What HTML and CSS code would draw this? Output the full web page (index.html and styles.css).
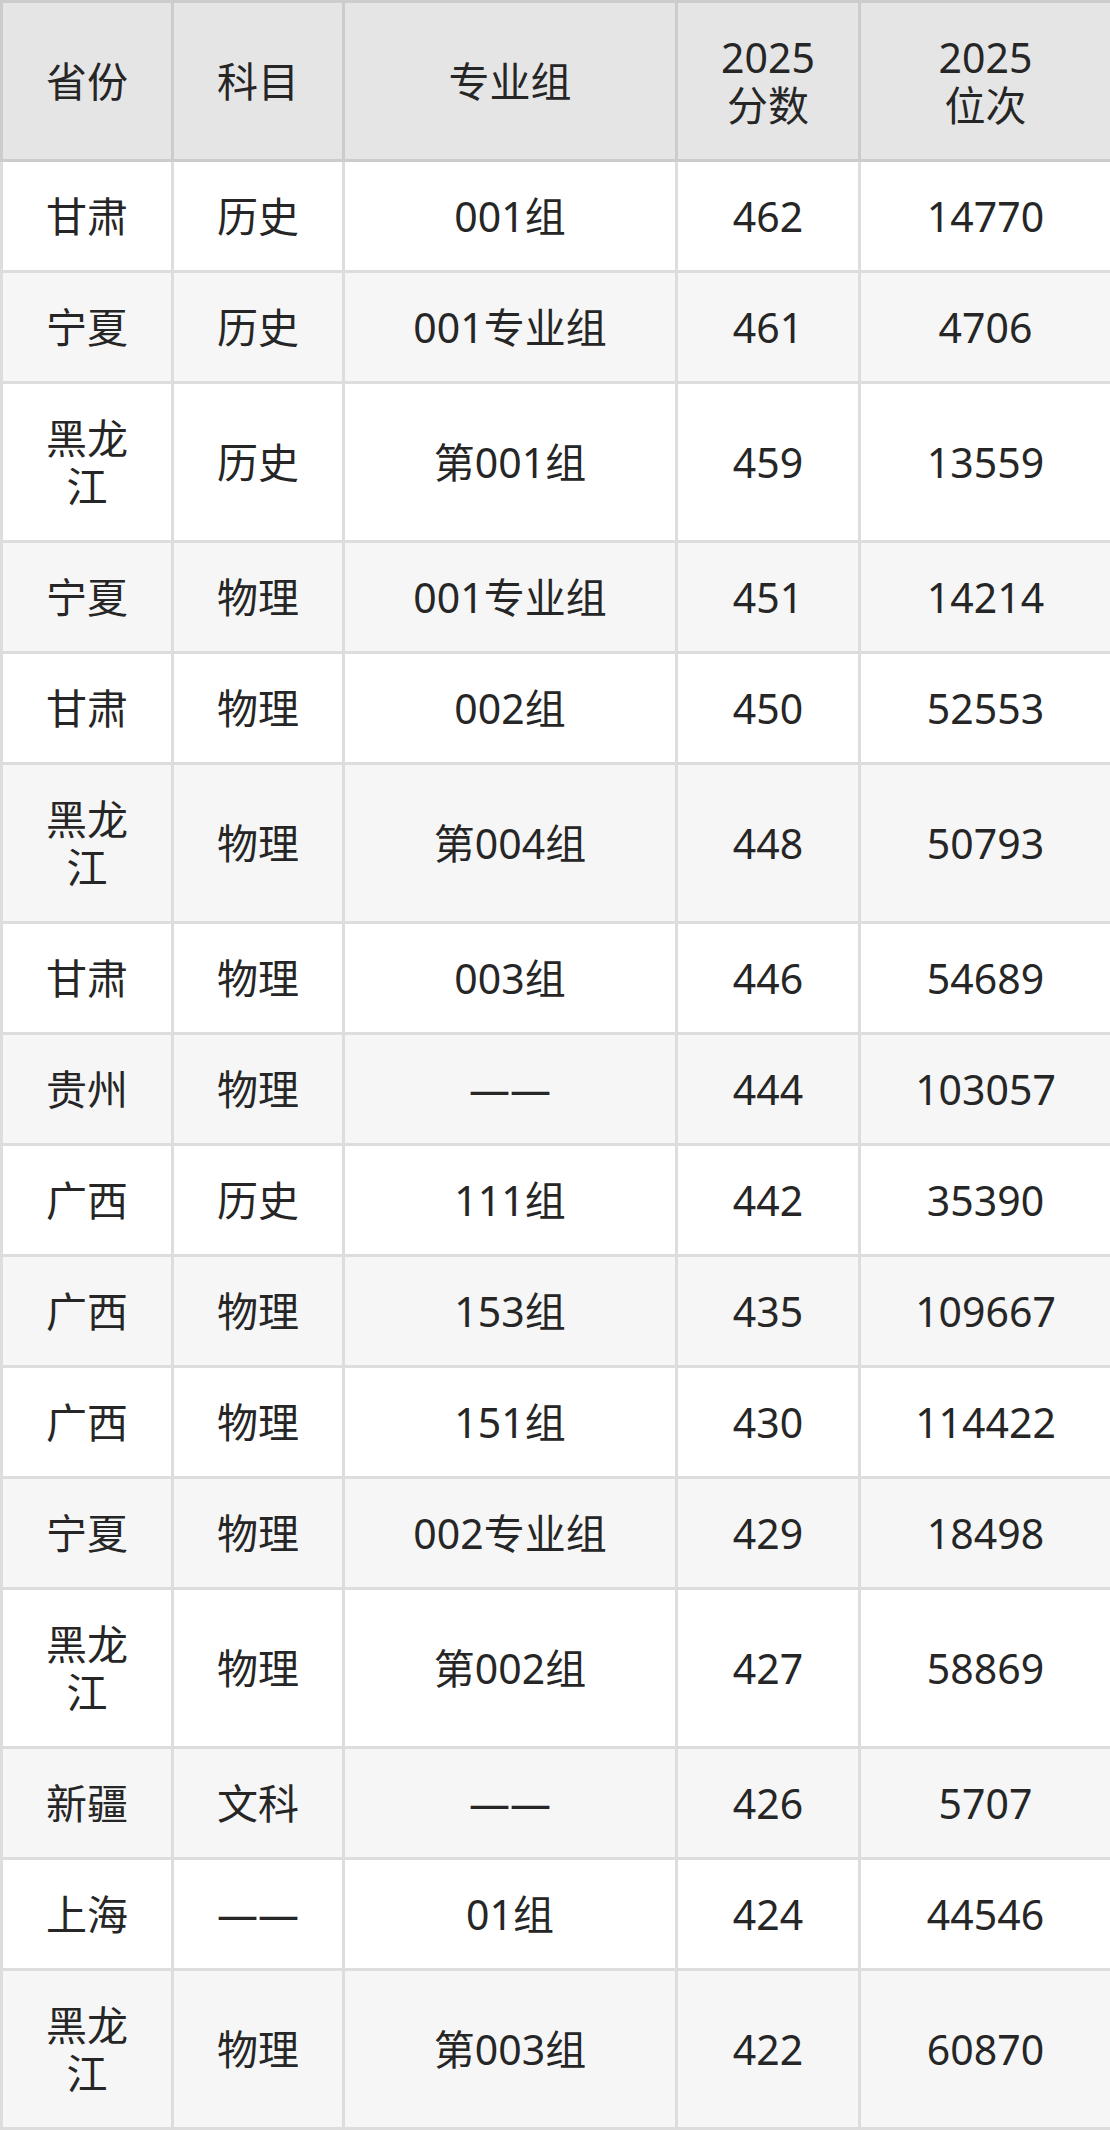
FILE: index.html
```html
<!DOCTYPE html>
<html lang="zh-CN">
<head>
<meta charset="utf-8">
<title>分数线</title>
<link rel="stylesheet" href="styles.css">
</head>
<body>
<table class="score-table">
  <colgroup>
    <col class="c-prov">
    <col class="c-subj">
    <col class="c-group">
    <col class="c-score">
    <col class="c-rank">
  </colgroup>
  <thead>
    <tr><th>省份</th><th>科目</th><th>专业组</th><th>2025<br>分数</th><th>2025<br>位次</th></tr>
  </thead>
  <tbody>
    <tr><td>甘肃</td><td>历史</td><td>001组</td><td>462</td><td>14770</td></tr>
    <tr><td>宁夏</td><td>历史</td><td>001专业组</td><td>461</td><td>4706</td></tr>
    <tr><td>黑龙<br>江</td><td>历史</td><td>第001组</td><td>459</td><td>13559</td></tr>
    <tr><td>宁夏</td><td>物理</td><td>001专业组</td><td>451</td><td>14214</td></tr>
    <tr><td>甘肃</td><td>物理</td><td>002组</td><td>450</td><td>52553</td></tr>
    <tr><td>黑龙<br>江</td><td>物理</td><td>第004组</td><td>448</td><td>50793</td></tr>
    <tr><td>甘肃</td><td>物理</td><td>003组</td><td>446</td><td>54689</td></tr>
    <tr><td>贵州</td><td>物理</td><td>——</td><td>444</td><td>103057</td></tr>
    <tr><td>广西</td><td>历史</td><td>111组</td><td>442</td><td>35390</td></tr>
    <tr><td>广西</td><td>物理</td><td>153组</td><td>435</td><td>109667</td></tr>
    <tr><td>广西</td><td>物理</td><td>151组</td><td>430</td><td>114422</td></tr>
    <tr><td>宁夏</td><td>物理</td><td>002专业组</td><td>429</td><td>18498</td></tr>
    <tr><td>黑龙<br>江</td><td>物理</td><td>第002组</td><td>427</td><td>58869</td></tr>
    <tr><td>新疆</td><td>文科</td><td>——</td><td>426</td><td>5707</td></tr>
    <tr><td>上海</td><td>——</td><td>01组</td><td>424</td><td>44546</td></tr>
    <tr><td>黑龙<br>江</td><td>物理</td><td>第003组</td><td>422</td><td>60870</td></tr>
  </tbody>
</table>
</body>
</html>
```

FILE: styles.css
```css
html, body {
  margin: 0;
  padding: 0;
  background: #ffffff;
}

body {
  font-family: "Noto Sans", "Open Sans", "Noto Sans CJK SC", sans-serif;
  color: #262626;
}

.score-table {
  width: 1110px;
  border-collapse: collapse;
  table-layout: fixed;
  font-size: 41px;
  line-height: 48px;
}

.c-prov { width: 171px; }
.c-subj { width: 171px; }
.c-group { width: 333px; }
.c-score { width: 183px; }
.c-rank { width: 252px; }

.score-table th,
.score-table td {
  padding: 30px 0;
  text-align: center;
  vertical-align: middle;
  font-weight: normal;
}

.score-table th {
  background: #e5e5e5;
  border: 3px solid #cccccc;
}

.score-table td {
  border: 3px solid #dddddd;
}

.score-table tbody tr:nth-child(odd) td {
  background: #ffffff;
}

.score-table tbody tr:nth-child(even) td {
  background: #f6f6f6;
}
```
